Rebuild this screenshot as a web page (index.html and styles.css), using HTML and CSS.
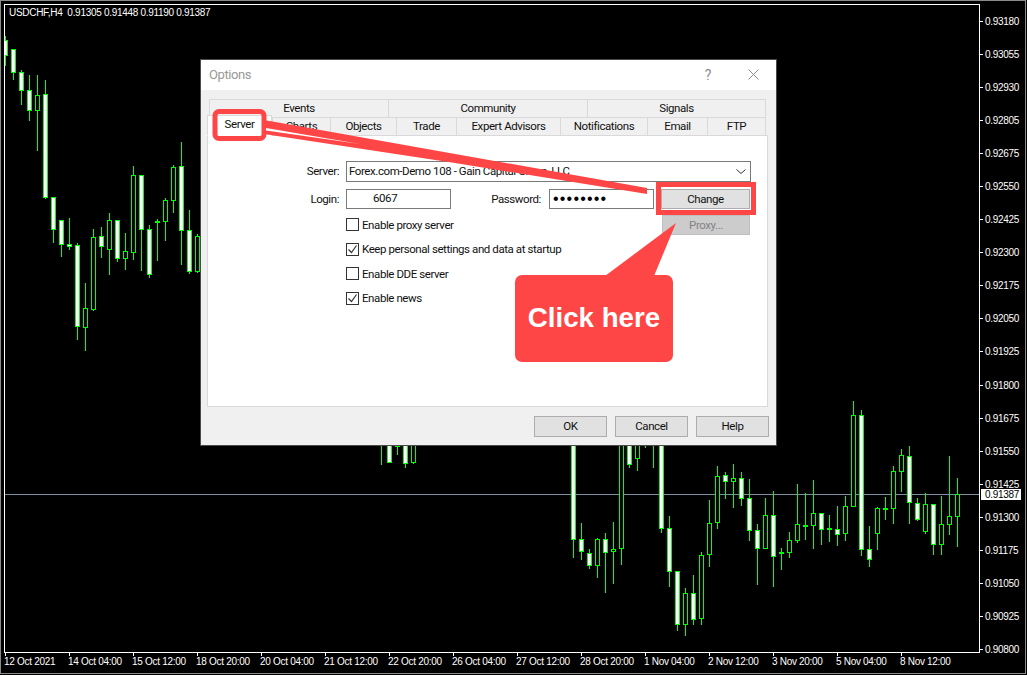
FILE: index.html
```html
<!DOCTYPE html>
<html lang="en">
<head>
    <meta charset="UTF-8">
    <meta name="viewport" content="width=device-width, initial-scale=1.0">
    <title>Options</title>
    <link rel="stylesheet" href="styles.css">
</head>
<body>

<div class="terminal">
    <div class="chart-row">
        <div class="chart">
            <svg id="candles" class="candles" width="974" height="647" viewBox="5 5 974 647"></svg>
            <span class="legend">USDCHF,H4&nbsp; 0.91305 0.91448 0.91190 0.91387</span>
        </div>
        <div class="price-axis">
            <span class="price">0.93180</span>
            <span class="price">0.93055</span>
            <span class="price">0.92930</span>
            <span class="price">0.92805</span>
            <span class="price">0.92675</span>
            <span class="price">0.92550</span>
            <span class="price">0.92425</span>
            <span class="price">0.92300</span>
            <span class="price">0.92175</span>
            <span class="price">0.92050</span>
            <span class="price">0.91925</span>
            <span class="price">0.91800</span>
            <span class="price">0.91675</span>
            <span class="price">0.91550</span>
            <span class="price">0.91425</span>
            <span class="price">0.91300</span>
            <span class="price">0.91175</span>
            <span class="price">0.91050</span>
            <span class="price">0.90925</span>
            <span class="price">0.90800</span>
            <span class="price-tag">0.91387</span>
        </div>
    </div>
    <div class="time-axis">
        <span class="time">12 Oct 2021</span>
        <span class="time">14 Oct 04:00</span>
        <span class="time">15 Oct 12:00</span>
        <span class="time">18 Oct 20:00</span>
        <span class="time">20 Oct 04:00</span>
        <span class="time">21 Oct 12:00</span>
        <span class="time">22 Oct 20:00</span>
        <span class="time">26 Oct 04:00</span>
        <span class="time">27 Oct 12:00</span>
        <span class="time">28 Oct 20:00</span>
        <span class="time">1 Nov 04:00</span>
        <span class="time">2 Nov 12:00</span>
        <span class="time">3 Nov 20:00</span>
        <span class="time">5 Nov 04:00</span>
        <span class="time">8 Nov 12:00</span>
    </div>
</div>

<div class="dialog">
    <div class="title-bar">
        <span class="title">Options</span>
        <span class="help-mark">?</span>
        <svg class="close-icon" width="11" height="11" viewBox="0 0 11 11">
            <path d="M0.5 0.5L10.5 10.5M10.5 0.5L0.5 10.5" stroke="#8c8c8c" fill="none"/>
        </svg>
    </div>
    <div class="dialog-body">
        <div class="tabs tabs-top">
            <span class="tab">Events</span>
            <span class="tab">Community</span>
            <span class="tab">Signals</span>
        </div>
        <div class="tabs tabs-bottom">
            <span class="tab tab-active">Server</span>
            <span class="tab">Charts</span>
            <span class="tab">Objects</span>
            <span class="tab">Trade</span>
            <span class="tab">Expert Advisors</span>
            <span class="tab">Notifications</span>
            <span class="tab">Email</span>
            <span class="tab">FTP</span>
        </div>
        <div class="panel">
            <div class="form-row">
                <label class="field-label">Server:</label>
                <div class="combo">
                    <span>Forex.com-Demo 108 - Gain Capital Group, LLC</span>
                    <svg width="10" height="5" viewBox="0 0 10 5">
                        <path d="M0.5 0.5L5 4.5L9.5 0.5" stroke="#333" fill="none"/>
                    </svg>
                </div>
            </div>
            <div class="form-row form-row-login">
                <label class="field-label">Login:</label>
                <div class="input input-login">6067</div>
                <label class="password-label">Password:</label>
                <div class="input input-password">••••••••</div>
                <button class="btn btn-change">Change</button>
            </div>
            <div class="options">
                <div class="checks">
                    <div class="check-row"><span class="check-box"></span>Enable proxy server</div>
                    <div class="check-row">
                        <span class="check-box"><svg width="11" height="11" viewBox="0 0 11 11"><path d="M1.5 5.5L4.5 8.5L9.5 1.5" stroke="#333" stroke-width="1.2" fill="none"/></svg></span>Keep personal settings and data at startup
                    </div>
                    <div class="check-row"><span class="check-box"></span>Enable DDE server</div>
                    <div class="check-row">
                        <span class="check-box"><svg width="11" height="11" viewBox="0 0 11 11"><path d="M1.5 5.5L4.5 8.5L9.5 1.5" stroke="#333" stroke-width="1.2" fill="none"/></svg></span>Enable news
                    </div>
                </div>
                <button class="btn btn-proxy">Proxy...</button>
            </div>
        </div>
        <div class="dialog-buttons">
            <button class="btn btn-footer">OK</button>
            <button class="btn btn-footer">Cancel</button>
            <button class="btn btn-footer">Help</button>
        </div>
    </div>
</div>

<!-- red marks drawn over the screenshot -->
<svg class="marks" width="1027" height="675" viewBox="0 0 1027 675">
    <rect x="215" y="111.5" width="49" height="27" rx="4" fill="none" stroke="#ff4646" stroke-width="5"/>
    <polygon points="264,120 647,188 647,194 455,163 264,134" fill="#ff4646"/>
    <polygon points="266,128 266,130.5 360,144" fill="#fff"/>
    <rect x="658.5" y="184.5" width="95" height="28" fill="none" stroke="#ff4646" stroke-width="5"/>
    <polygon points="605,276 676,223 654,276" fill="#ff4646"/>
</svg>
<div class="bubble">Click here</div>

<script src="script.js"></script>

</body>
</html>
```

FILE: styles.css
```css
* {
    box-sizing: border-box;
}

body {
    margin: 0;
    width: 1027px;
    height: 675px;
    overflow: hidden;
    background-color: black;
    font-family: "Roboto", "Liberation Sans", sans-serif;
    font-size: 11.5px;
    letter-spacing: -0.42px;
    color: #111;
}

.terminal {
    width: 1026px;
    height: 674px;
    padding: 3px 0 0 3px;
    border: 1px solid #8a8a8a;
    color: white;
    font-family: "Liberation Sans", sans-serif;
    font-size: 10px;
    letter-spacing: -0.3px;
}

.chart-row {
    display: flex;
    height: 649px;
}

.chart {
    position: relative;
    width: 976px;
    height: 649px;
    border: 1px solid white;
}

.candles {
    display: block;
}

.legend {
    position: absolute;
    left: 4px;
    top: 1px;
    line-height: 14px;
    white-space: nowrap;
}

.price-axis {
    position: relative;
    display: flex;
    flex-direction: column;
    padding-top: 1px;
}

.price {
    flex: none;
    display: flex;
    align-items: center;
    height: 33.05px;
    white-space: nowrap;
}

.price::before {
    content: "";
    width: 3px;
    height: 1px;
    margin-right: 2px;
    background-color: white;
}

.price-tag {
    position: absolute;
    left: 1px;
    top: 485px;
    width: 40px;
    height: 11px;
    padding-left: 4px;
    line-height: 11px;
    background-color: white;
    color: black;
}

.time-axis {
    display: grid;
    grid-template-columns: repeat(15, 64px);
}

.time {
    white-space: nowrap;
    line-height: 12px;
}

.time::before {
    content: "";
    display: block;
    width: 1px;
    height: 3px;
    margin-left: 1px;
    background-color: white;
}

.dialog {
    position: absolute;
    z-index: 1;
    left: 200px;
    top: 59px;
    width: 577px;
    height: 387px;
    display: flex;
    flex-direction: column;
    border: 1px solid #4a4a4a;
    background-color: #f0f0f0;
}

.title-bar {
    display: flex;
    align-items: center;
    height: 30px;
    padding: 0 17px 1px 8px;
    background-color: white;
    color: #999;
}

.title {
    flex: 1;
    font-size: 13px;
}

.help-mark {
    margin-right: 37px;
    font-size: 14px;
    color: #8c8c8c;
}

.dialog-body {
    flex: 1;
    padding-top: 9px;
}

.tabs {
    display: grid;
    margin-left: 8px;
    width: 557px;
}

.tabs-top {
    grid-template-columns: 179px 199px 179px;
    height: 18px;
}

.tabs-bottom {
    grid-template-columns: 63px 58px 66px 60px 104px 87px 60px 59px;
    height: 18px;
}

.tab {
    display: flex;
    align-items: center;
    justify-content: center;
    padding-bottom: 1px;
    border: 1px solid #d9d9d9;
    margin-right: -1px;
    margin-bottom: -1px;
    background-color: #f0f0f0;
}

.tab:last-child {
    margin-right: 0;
}

.tab-active {
    position: relative;
    z-index: 1;
    margin: -2px 0 -1px -2px;
    padding-bottom: 3px;
    border-bottom-color: white;
    background-color: white;
}

.panel {
    width: 561px;
    height: 272px;
    margin-left: 6px;
    padding-top: 25px;
    border: 1px solid #d9d9d9;
    background-color: white;
}

.form-row {
    display: flex;
    align-items: center;
}

.form-row-login {
    margin-top: 7px;
}

.field-label {
    width: 131px;
    margin-right: 7px;
    padding-bottom: 1px;
    text-align: right;
}

.combo {
    display: flex;
    align-items: center;
    justify-content: space-between;
    width: 405px;
    height: 21px;
    padding: 0 4px 1px 2px;
    border: 1px solid #7a7a7a;
}

.input {
    width: 105px;
    height: 20px;
    border: 1px solid #7a7a7a;
    line-height: 17px;
}

.input-login {
    padding-left: 26px;
}

.password-label {
    width: 90px;
    margin-right: 8px;
    padding-bottom: 1px;
    text-align: right;
}

.input-password {
    padding-left: 3px;
    font-family: "Liberation Sans", sans-serif;
    font-size: 16px;
    line-height: 18px;
    letter-spacing: 1.2px;
    color: black;
}

.btn {
    padding: 0 0 1px;
    border: 1px solid #adadad;
    background-color: #e1e1e1;
    color: #111;
    font-family: inherit;
    font-size: 11.5px;
    letter-spacing: inherit;
}

.btn-change {
    width: 89px;
    height: 20px;
    margin-left: 7px;
}

.btn-proxy {
    width: 88px;
    height: 20px;
    margin: 0 1px 0 0;
    border-color: #bfbfbf;
    background-color: #cccccc;
    color: #838383;
}

.options {
    display: flex;
    justify-content: space-between;
    width: 405px;
    margin: 6px 0 0 138px;
}

.checks {
    display: flex;
    flex-direction: column;
    gap: 11.5px;
    padding-top: 3px;
}

.check-row {
    display: flex;
    align-items: center;
    height: 13px;
    white-space: nowrap;
}

.check-box {
    display: flex;
    width: 13px;
    height: 13px;
    margin-right: 3px;
    border: 1px solid #333;
}

.dialog-buttons {
    display: flex;
    justify-content: flex-end;
    gap: 8px;
    margin-top: 9px;
    padding-right: 7px;
}

.btn-footer {
    width: 73px;
    height: 21px;
}

.marks {
    position: absolute;
    z-index: 2;
    left: 0;
    top: 0;
}

.bubble {
    position: absolute;
    z-index: 2;
    left: 515px;
    top: 275px;
    width: 158px;
    height: 87px;
    border-radius: 7px;
    background-color: #ff4646;
    color: white;
    font-family: "Liberation Sans", sans-serif;
    font-size: 27.7px;
    font-weight: bold;
    letter-spacing: 0;
    line-height: 86px;
    text-align: center;
}
```

FILE: script.js
```js
// x, wick top, wick bottom, body top, body bottom, white body?
const CANDLES = [
    [5, 36, 66, 40, 55, 1], [13, 49, 80, 49, 72, 1], [21, 70, 105, 72, 90, 1],
    [29, 75, 121, 90, 110, 1], [37, 75, 151, 95, 110, 0], [45, 80, 199, 94, 197, 1],
    [53, 197, 243, 197, 229, 1], [61, 220, 257, 220, 244, 1], [69, 218, 250, 244, 246, 1],
    [77, 243, 340, 245, 326, 1], [85, 283, 351, 308, 327, 0], [93, 229, 311, 237, 309, 0],
    [101, 227, 258, 236, 246, 1], [109, 213, 275, 220, 249, 0], [117, 220, 262, 220, 258, 1],
    [125, 233, 270, 251, 258, 0], [133, 166, 260, 175, 252, 0], [141, 175, 271, 175, 229, 1],
    [149, 225, 278, 229, 274, 1], [157, 219, 261, 221, 221, 1], [165, 198, 241, 200, 221, 0],
    [173, 165, 213, 167, 200, 0], [181, 142, 265, 166, 230, 1], [189, 210, 274, 230, 271, 1],
    [197, 234, 273, 236, 271, 0],
    // only the ends of these show under the dialog
    [381, 400, 465, 405, 410, 0], [389, 400, 462, 405, 462, 1], [397, 400, 455, 405, 446, 0],
    [405, 400, 468, 405, 463, 1], [413, 400, 464, 405, 462, 0],
    [573, 400, 558, 405, 539, 1], [581, 523, 560, 539, 551, 1], [589, 549, 569, 553, 565, 1],
    [597, 538, 578, 539, 565, 0], [605, 533, 593, 539, 552, 1], [613, 522, 584, 549, 551, 0],
    [621, 400, 565, 405, 548, 0], [629, 400, 468, 405, 464, 1], [637, 400, 471, 405, 458, 0],
    [645, 400, 448, 405, 410, 0], [653, 400, 468, 405, 410, 0], [661, 400, 533, 405, 528, 1],
    [669, 516, 587, 528, 571, 1], [677, 571, 631, 571, 624, 1], [685, 588, 636, 593, 624, 0],
    [693, 575, 625, 593, 619, 1], [701, 552, 625, 555, 618, 0], [709, 500, 567, 523, 554, 0],
    [717, 466, 529, 476, 522, 0], [725, 472, 499, 475, 481, 1], [733, 464, 508, 478, 481, 0],
    [741, 472, 506, 478, 498, 1], [749, 479, 541, 498, 530, 1], [757, 524, 585, 530, 548, 1],
    [765, 498, 549, 515, 548, 0], [773, 491, 587, 515, 556, 1], [781, 548, 570, 552, 552, 1],
    [789, 532, 558, 540, 552, 0], [797, 484, 543, 524, 540, 0], [805, 493, 540, 525, 525, 1],
    [813, 480, 549, 513, 525, 0], [821, 513, 545, 513, 529, 1], [829, 515, 542, 528, 528, 1],
    [837, 506, 546, 529, 534, 1], [845, 496, 541, 506, 533, 0], [853, 401, 507, 415, 506, 0],
    [861, 410, 556, 415, 549, 1], [869, 526, 567, 549, 559, 1], [877, 507, 550, 508, 533, 0],
    [885, 497, 520, 508, 508, 1], [893, 466, 524, 471, 508, 0], [901, 449, 492, 455, 471, 0],
    [909, 446, 524, 456, 502, 1], [917, 498, 521, 503, 519, 1], [925, 493, 534, 504, 531, 0],
    [933, 504, 555, 504, 544, 1], [941, 496, 555, 524, 544, 0], [949, 456, 535, 516, 524, 0],
    [957, 478, 547, 494, 516, 0]
];

const GREEN = '#00ff00';
let markup = '<rect x="5" y="494" width="974" height="1" fill="#7f8fa3"/>';

CANDLES.forEach(function(c) {
    const [x, high, low, top, bottom, white] = c;
    markup += `<rect x="${x}" y="${high}" width="1" height="${low - high}" fill="${GREEN}"/>`;
    if (bottom - top < 2) {
        // open and close almost equal, just a thick dash
        markup += `<rect x="${x - 2}" y="${top}" width="5" height="2" fill="${GREEN}"/>`;
    } else {
        markup += `<rect x="${x - 1.5}" y="${top + 0.5}" width="4" height="${bottom - top}" fill="${white ? 'white' : 'black'}" stroke="${GREEN}"/>`;
    }
});

document.getElementById('candles').innerHTML = markup;
```
